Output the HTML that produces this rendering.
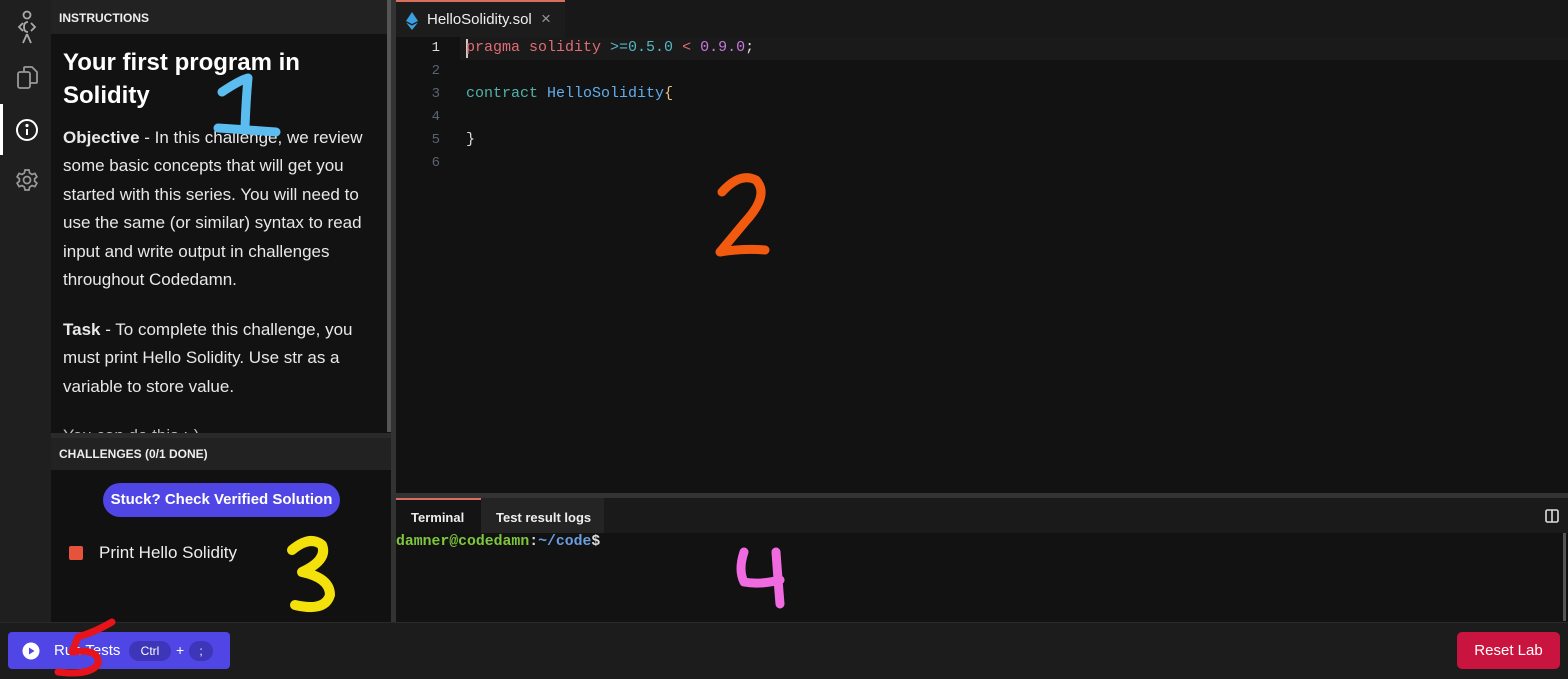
<!DOCTYPE html>
<html><head><meta charset="utf-8"><style>
*{margin:0;padding:0;box-sizing:border-box}
body{width:1568px;height:679px;background:#121212;position:relative;overflow:hidden;font-family:"Liberation Sans",sans-serif;color:#eee}
.a{position:absolute}
.t{position:absolute;left:63px;font-size:17px;color:#e8e8e8;white-space:nowrap}
.m{font-family:"Liberation Mono",monospace;font-size:15px;position:absolute;white-space:pre}
.ln{position:absolute;left:396px;width:44px;text-align:right;font-family:"Liberation Mono",monospace;font-size:14px;color:#5a6270}
</style></head><body>
<div class="a" style="left:0;top:0;width:51px;height:622px;background:#1f1f1f"></div>
<div class="a" style="left:0;top:104px;width:3px;height:51px;background:#fff"></div>
<svg class="a" style="left:14px;top:10px" width="26" height="36" viewBox="0 0 26 36" fill="none" stroke="#aaa" stroke-width="1.8">
<circle cx="13" cy="5" r="3.5"/><path d="M9 13 L5 17 L9 21 M17 13 L21 17 L17 21 M14 12 Q10 12 10 17 Q10 22 14 22"/><path d="M13 24 L9 33 M13 24 L17 33"/></svg>
<svg class="a" style="left:16px;top:65px" width="24" height="26" viewBox="0 0 24 26" fill="none" stroke="#999" stroke-width="1.8">
<rect x="2" y="7" width="12" height="16" rx="2"/><path d="M8 7 V3 a1 1 0 0 1 1-1 H16 L21 7 V17 a1 1 0 0 1-1 1 H14"/></svg>
<svg class="a" style="left:15px;top:118px" width="24" height="24" viewBox="0 0 24 24" fill="none" stroke="#fff" stroke-width="2">
<circle cx="12" cy="12" r="10"/><path d="M12 11 V17"/><circle cx="12" cy="7.5" r="0.6" fill="#fff"/></svg>
<svg class="a" style="left:15px;top:168px" width="24" height="24" viewBox="0 0 24 24" fill="none" stroke="#999" stroke-width="1.7">
<circle cx="12" cy="12" r="3.5"/><path d="M10 2h4l.6 3 2.4 1.4 2.9-1 2 3.4-2.3 2v2.4l2.3 2-2 3.4-2.9-1L14.6 19 14 22h-4l-.6-3L7 17.6l-2.9 1-2-3.4 2.3-2v-2.4l-2.3-2 2-3.4 2.9 1L9.4 5z"/></svg>

<div class="a" style="left:51px;top:0;width:340px;height:34px;background:#222"></div>
<div class="a" style="left:59px;top:11px;font-size:12px;font-weight:bold;color:#eee">INSTRUCTIONS</div>
<div class="a" style="left:51px;top:34px;width:337px;height:400px;background:#121212"></div>
<div class="a" style="left:387px;top:0;width:4px;height:432px;background:#555"></div>
<div class="t" style="top:49px;font-size:24px;font-weight:bold;color:#fff">Your first program in</div>
<div class="t" style="top:82px;font-size:24px;font-weight:bold;color:#fff">Solidity</div>
<div class="t" style="top:128px"><b>Objective</b> - In this challenge, we review</div>
<div class="t" style="top:156px">some basic concepts that will get you</div>
<div class="t" style="top:185px">started with this series. You will need to</div>
<div class="t" style="top:213px">use the same (or similar) syntax to read</div>
<div class="t" style="top:242px">input and write output in challenges</div>
<div class="t" style="top:270px">throughout Codedamn.</div>
<div class="t" style="top:320px"><b>Task</b> - To complete this challenge, you</div>
<div class="t" style="top:348px">must print Hello Solidity. Use str as a</div>
<div class="t" style="top:377px">variable to store value.</div>
<div class="a" style="left:63px;top:426px;width:300px;height:7px;overflow:hidden"><div style="font-size:17px;line-height:20px;color:#bbb;white-space:nowrap">You can do this :-)</div></div>
<div class="a" style="left:51px;top:433px;width:340px;height:5px;background:#2a2a2a"></div>
<div class="a" style="left:51px;top:438px;width:340px;height:32px;background:#222"></div>
<div class="a" style="left:59px;top:447px;font-size:12px;font-weight:bold;color:#eee">CHALLENGES (0/1 DONE)</div>
<div class="a" style="left:51px;top:470px;width:340px;height:152px;background:#111"></div>
<div class="a" style="left:103px;top:483px;width:237px;height:34px;border-radius:17px;background:#4f46e5;color:#fff;font-size:15px;font-weight:bold;text-align:center;line-height:34px">Stuck? Check Verified Solution</div>
<div class="a" style="left:69px;top:546px;width:14px;height:14px;border-radius:2px;background:#e5533a"></div>
<div class="a" style="left:99px;top:543px;font-size:17px;color:#eee">Print Hello Solidity</div>

<div class="a" style="left:391px;top:0;width:5px;height:622px;background:#333"></div>

<div class="a" style="left:396px;top:0;width:1172px;height:37px;background:#181818"></div>
<div class="a" style="left:396px;top:0;width:169px;height:37px;background:#1c1c1c;border-top:2px solid #d9705f"></div>
<svg class="a" style="left:406px;top:12px" width="12" height="18" viewBox="0 0 12 18"><path d="M6 0 L12 9 L6 12 L0 9Z" fill="#3b9fe0"/><path d="M0 10.5 L6 13.5 L12 10.5 L6 18Z" fill="#3b9fe0"/></svg>
<div class="a" style="left:427px;top:11px;font-size:15px;color:#eee">HelloSolidity.sol</div>
<div class="a" style="left:541px;top:9px;font-size:17px;color:#999">×</div>
<div class="a" style="left:460px;top:37px;width:1108px;height:23px;background:#1a1a1a"></div>
<div class="a" style="left:466px;top:39px;width:2px;height:19px;background:#ccc"></div>
<div class="ln" style="top:40px;color:#ddd">1</div>
<div class="ln" style="top:63px">2</div>
<div class="ln" style="top:86px">3</div>
<div class="ln" style="top:109px">4</div>
<div class="ln" style="top:132px">5</div>
<div class="ln" style="top:155px">6</div>
<div class="m" style="left:466px;top:39px"><span style="color:#e06c75">pragma solidity</span> <span style="color:#56b6c2">&gt;=0.5.0</span> <span style="color:#e06c75">&lt;</span> <span style="color:#c678dd">0.9.0</span><span style="color:#ddd">;</span></div>
<div class="m" style="left:466px;top:85px"><span style="color:#4fb3a9">contract</span> <span style="color:#61aeee">HelloSolidity</span><span style="color:#e5c07b">{</span></div>
<div class="m" style="left:466px;top:131px;color:#ddd">}</div>

<div class="a" style="left:396px;top:493px;width:1172px;height:5px;background:#333"></div>
<div class="a" style="left:396px;top:498px;width:1172px;height:35px;background:#1a1a1a"></div>
<div class="a" style="left:396px;top:498px;width:85px;height:35px;background:#141414;border-top:2px solid #d9705f"></div>
<div class="a" style="left:481px;top:498px;width:123px;height:35px;background:#242424"></div>
<div class="a" style="left:411px;top:510px;font-size:13px;font-weight:bold;color:#eee">Terminal</div>
<div class="a" style="left:496px;top:510px;font-size:13px;font-weight:bold;color:#eee">Test result logs</div>
<svg class="a" style="left:1545px;top:509px" width="14" height="14" viewBox="0 0 14 14" fill="none" stroke="#ddd" stroke-width="1.6"><rect x="1" y="1" width="12" height="12" rx="1.5"/><path d="M7 1V13"/></svg>
<div class="a" style="left:1563px;top:533px;width:3px;height:88px;background:#555"></div>
<div class="m" style="left:396px;top:534px;font-size:14.8px;font-weight:bold"><span style="color:#7ec73c">damner@codedamn</span><span style="color:#ddd">:</span><span style="color:#6b9ee0">~/code</span><span style="color:#ddd">$</span></div>

<div class="a" style="left:0;top:622px;width:1568px;height:57px;background:#1c1c1c;border-top:1px solid #2a2a2a"></div>
<div class="a" style="left:8px;top:632px;width:222px;height:37px;border-radius:4px;background:#4f46e5"></div>
<svg class="a" style="left:22px;top:642px" width="18" height="18" viewBox="0 0 18 18"><circle cx="9" cy="9" r="8.5" fill="#fff"/><path d="M7 5.5 L12.5 9 L7 12.5Z" fill="#4f46e5"/></svg>
<div class="a" style="left:54px;top:642px;font-size:15px;color:#fff">Run Tests</div>
<div class="a" style="left:129px;top:641px;width:42px;height:20px;border-radius:10px;background:#3d36b8;color:#fff;font-size:12px;text-align:center;line-height:20px">Ctrl</div>
<div class="a" style="left:176px;top:642px;font-size:14px;color:#fff">+</div>
<div class="a" style="left:189px;top:641px;width:24px;height:20px;border-radius:10px;background:#3d36b8;color:#fff;font-size:12px;text-align:center;line-height:20px">;</div>
<div class="a" style="left:1457px;top:632px;width:103px;height:37px;border-radius:5px;background:#c8143f;color:#fff;font-size:15px;text-align:center;line-height:37px">Reset Lab</div>

<svg class="a" style="left:0;top:0" width="1568" height="679" fill="none" stroke-linecap="round" stroke-linejoin="round">
<path d="M222 92 Q240 80 248 78 Q246 100 245 127 M218 128 Q250 130 276 132" stroke="#5bbcf0" stroke-width="9"/>
<path d="M722 192 Q740 172 756 180 Q770 195 745 222 L720 252 Q745 248 765 250" stroke="#f25a10" stroke-width="9"/>
<path d="M292 550 Q310 535 322 545 Q328 560 302 572 Q330 578 330 595 Q325 612 295 605" stroke="#f4e00a" stroke-width="10"/>
<path d="M744 552 Q738 570 744 582 Q760 585 780 580 M776 552 Q778 580 780 604" stroke="#f06ae0" stroke-width="9"/>
<path d="M112 622 Q95 632 78 637 L72 652 Q100 648 98 664 Q90 676 58 672" stroke="#e8141c" stroke-width="7"/>
</svg>
</body></html>
